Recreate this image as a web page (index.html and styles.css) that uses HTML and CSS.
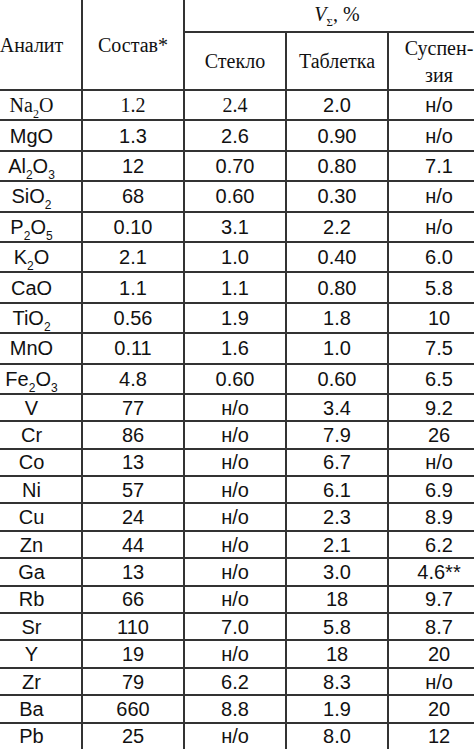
FILE: index.html
```html
<!DOCTYPE html>
<html lang="ru">
<head>
<meta charset="utf-8">
<link rel="stylesheet" href="styles.css">
</head>
<body>
<table class="data">
  <colgroup>
    <col class="c1"><col class="c2"><col class="c3"><col class="c4"><col class="c5">
  </colgroup>
  <thead>
    <tr class="h1">
      <th rowspan="2" class="serif first">Аналит</th>
      <th rowspan="2" class="serif">Состав*</th>
      <th colspan="3" class="serif vs"><i>V</i><sub class="sig">Σ</sub>, %</th>
    </tr>
    <tr class="h2">
      <th class="serif">Стекло</th>
      <th class="serif">Таблетка</th>
      <th class="serif two">Суспен-<br>зия</th>
    </tr>
  </thead>
  <tbody>
    <tr class="tall"><td class="serif first">Na<sub>2</sub>O</td><td class="serif">1.2</td><td class="serif">2.4</td><td>2.0</td><td>н/о</td></tr>
    <tr class="tall"><td class="first">MgO</td><td>1.3</td><td>2.6</td><td>0.90</td><td>н/о</td></tr>
    <tr class="tall"><td class="first">Al<sub>2</sub>O<sub>3</sub></td><td>12</td><td>0.70</td><td>0.80</td><td>7.1</td></tr>
    <tr class="tall"><td class="first">SiO<sub>2</sub></td><td>68</td><td>0.60</td><td>0.30</td><td>н/о</td></tr>
    <tr class="tall"><td class="first">P<sub>2</sub>O<sub>5</sub></td><td>0.10</td><td>3.1</td><td>2.2</td><td>н/о</td></tr>
    <tr class="tall"><td class="first">K<sub>2</sub>O</td><td>2.1</td><td>1.0</td><td>0.40</td><td>6.0</td></tr>
    <tr class="tall"><td class="first">CaO</td><td>1.1</td><td>1.1</td><td>0.80</td><td>5.8</td></tr>
    <tr class="tall"><td class="first">TiO<sub>2</sub></td><td>0.56</td><td>1.9</td><td>1.8</td><td>10</td></tr>
    <tr class="tall"><td class="first">MnO</td><td>0.11</td><td>1.6</td><td>1.0</td><td>7.5</td></tr>
    <tr class="tall"><td class="first">Fe<sub>2</sub>O<sub>3</sub></td><td>4.8</td><td>0.60</td><td>0.60</td><td>6.5</td></tr>
    <tr class="short"><td class="first">V</td><td>77</td><td>н/о</td><td>3.4</td><td>9.2</td></tr>
    <tr class="short"><td class="first">Cr</td><td>86</td><td>н/о</td><td>7.9</td><td>26</td></tr>
    <tr class="short"><td class="first">Co</td><td>13</td><td>н/о</td><td>6.7</td><td>н/о</td></tr>
    <tr class="short"><td class="first">Ni</td><td>57</td><td>н/о</td><td>6.1</td><td>6.9</td></tr>
    <tr class="short"><td class="first">Cu</td><td>24</td><td>н/о</td><td>2.3</td><td>8.9</td></tr>
    <tr class="short"><td class="first">Zn</td><td>44</td><td>н/о</td><td>2.1</td><td>6.2</td></tr>
    <tr class="short"><td class="first">Ga</td><td>13</td><td>н/о</td><td>3.0</td><td>4.6**</td></tr>
    <tr class="short"><td class="first">Rb</td><td>66</td><td>н/о</td><td>18</td><td>9.7</td></tr>
    <tr class="short"><td class="first">Sr</td><td>110</td><td>7.0</td><td>5.8</td><td>8.7</td></tr>
    <tr class="short"><td class="first">Y</td><td>19</td><td>н/о</td><td>18</td><td>20</td></tr>
    <tr class="short"><td class="first">Zr</td><td>79</td><td>6.2</td><td>8.3</td><td>н/о</td></tr>
    <tr class="short"><td class="first">Ba</td><td>660</td><td>8.8</td><td>1.9</td><td>20</td></tr>
    <tr class="short"><td class="first">Pb</td><td>25</td><td>н/о</td><td>8.0</td><td>12</td></tr>
  </tbody>
</table>
</body>
</html>
```

FILE: styles.css
```css
html, body {
  margin: 0;
  padding: 0;
  background: #fff;
  overflow: hidden;
}

.data {
  border-collapse: collapse;
  table-layout: fixed;
  width: 508px;
  margin-left: -18px;
  color: #111;
  font-family: "Liberation Sans", Arial, sans-serif;
  font-size: 20px;
}

.c1 { width: 100px; }
.c2, .c3, .c4, .c5 { width: 102px; }

.data th,
.data td {
  border: 2px solid #333;
  padding: 0;
  text-align: center;
  vertical-align: middle;
  font-weight: normal;
  line-height: 22px;
  white-space: nowrap;
}

.data thead tr:first-child th {
  border-top: none;
}

.data .first {
  border-left: none;
}

.serif {
  font-family: "Liberation Serif", "Times New Roman", serif;
}

.h1 { height: 32px; }
.h2 { height: 57px; }

.vs {
  padding-bottom: 4px !important;
}

.vs i {
  font-style: italic;
}

.sig {
  font-size: 11px;
  vertical-align: -5px;
  line-height: 0;
}

.two {
  line-height: 27px !important;
  padding-top: 2px !important;
}

.tall { height: 30.4px; }
.short { height: 27.4px; }

sub {
  font-size: 12px;
  vertical-align: -6px;
  line-height: 0;
}
```
